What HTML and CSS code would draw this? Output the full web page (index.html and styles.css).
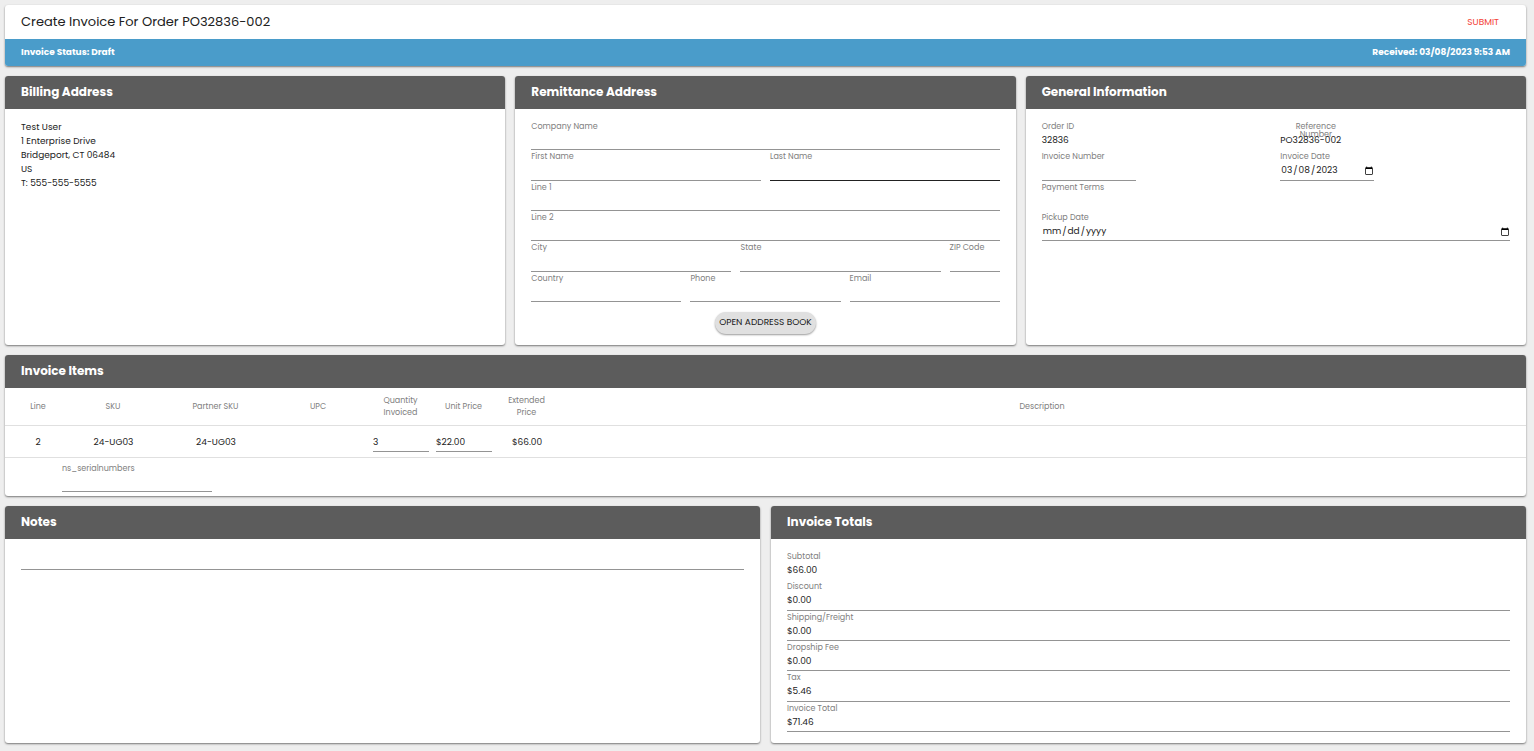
FILE: index.html
```
<!DOCTYPE html>
<html lang="en">
<head>
    <meta charset="utf-8">
    <title>Create Invoice For Order PO32836-002</title>
    <link rel="stylesheet" href="styles.css">
</head>
<body>
    <header class="card">
        <div class="title-bar">
            <h1>Create Invoice For Order PO32836-002</h1>
            <button class="submit-btn" type="submit">SUBMIT</button>
        </div>
        <div class="status-bar">
            <span>Invoice Status: Draft</span>
            <span>Received: 03/08/2023 9:53 AM</span>
        </div>
    </header>

    <div class="cards three">
        <section class="card">
            <h2>Billing Address</h2>
            <address class="card-body">
                Test User<br>
                1 Enterprise Drive<br>
                Bridgeport, CT 06484<br>
                US<br>
                T: 555-555-5555
            </address>
        </section>

        <section class="card">
            <h2>Remittance Address</h2>
            <div class="card-body">
                <div class="fields">
                    <div class="row">
                        <div class="field"><label for="company">Company Name</label><input type="text" id="company"></div>
                    </div>
                    <div class="row">
                        <div class="field"><label for="first">First Name</label><input type="text" id="first"></div>
                        <div class="field"><label for="last">Last Name</label><input type="text" id="last" class="active"></div>
                    </div>
                    <div class="row">
                        <div class="field"><label for="line1">Line 1</label><input type="text" id="line1"></div>
                    </div>
                    <div class="row">
                        <div class="field"><label for="line2">Line 2</label><input type="text" id="line2"></div>
                    </div>
                    <div class="row">
                        <div class="field wide"><label for="city">City</label><input type="text" id="city"></div>
                        <div class="field wide"><label for="state">State</label><input type="text" id="state"></div>
                        <div class="field"><label for="zip">ZIP Code</label><input type="text" id="zip"></div>
                    </div>
                    <div class="row">
                        <div class="field"><label for="country">Country</label><input type="text" id="country"></div>
                        <div class="field"><label for="phone">Phone</label><input type="tel" id="phone"></div>
                        <div class="field"><label for="email">Email</label><input type="email" id="email"></div>
                    </div>
                </div>
                <button class="book-btn" type="button">OPEN ADDRESS BOOK</button>
            </div>
        </section>

        <section class="card">
            <h2>General Information</h2>
            <div class="card-body">
                <div class="fields">
                    <div class="row">
                        <div class="field"><span class="label">Order ID</span><span class="value">32836</span></div>
                        <div class="field"><span class="label ref-label">Reference<br>Number</span><span class="value">PO32836-002</span></div>
                    </div>
                    <div class="row">
                        <div class="field"><label for="invnum">Invoice Number</label><input type="text" id="invnum" class="short"></div>
                        <div class="field"><label for="invdate">Invoice Date</label><input type="date" id="invdate" class="short" value="2023-03-08"></div>
                    </div>
                    <div class="row">
                        <div class="field"><span class="label">Payment Terms</span><span class="value"></span></div>
                    </div>
                    <div class="row">
                        <div class="field"><label for="pickup">Pickup Date</label><input type="date" id="pickup"></div>
                    </div>
                </div>
            </div>
        </section>
    </div>

    <section class="card">
        <h2>Invoice Items</h2>
        <table class="items">
            <colgroup>
                <col class="col-line">
                <col class="col-sku">
                <col class="col-partner">
                <col class="col-sku">
                <col class="col-num">
                <col class="col-num">
                <col class="col-num">
                <col>
            </colgroup>
            <thead>
                <tr>
                    <th>Line</th>
                    <th>SKU</th>
                    <th>Partner SKU</th>
                    <th>UPC</th>
                    <th>Quantity Invoiced</th>
                    <th>Unit Price</th>
                    <th>Extended Price</th>
                    <th>Description</th>
                </tr>
            </thead>
            <tbody>
                <tr>
                    <td>2</td>
                    <td>24-UG03</td>
                    <td>24-UG03</td>
                    <td></td>
                    <td><input type="text" aria-label="Quantity Invoiced" value="3"></td>
                    <td><input type="text" aria-label="Unit Price" value="$22.00"></td>
                    <td>$66.00</td>
                    <td></td>
                </tr>
                <tr class="serial-row">
                    <td></td>
                    <td colspan="7">
                        <div class="field serial"><label for="serial">ns_serialnumbers</label><input type="text" id="serial"></div>
                    </td>
                </tr>
            </tbody>
        </table>
    </section>

    <div class="cards two">
        <section class="card">
            <h2>Notes</h2>
            <div class="card-body">
                <textarea class="notes" rows="1" aria-label="Notes"></textarea>
            </div>
        </section>

        <section class="card">
            <h2>Invoice Totals</h2>
            <div class="card-body">
                <div class="fields">
                    <div class="field"><span class="label">Subtotal</span><span class="value">$66.00</span></div>
                    <div class="field"><label for="discount">Discount</label><input type="text" id="discount" value="$0.00"></div>
                    <div class="field"><label for="shipping">Shipping/Freight</label><input type="text" id="shipping" value="$0.00"></div>
                    <div class="field"><label for="dropship">Dropship Fee</label><input type="text" id="dropship" value="$0.00"></div>
                    <div class="field"><label for="tax">Tax</label><input type="text" id="tax" value="$5.46"></div>
                    <div class="field"><label for="total">Invoice Total</label><input type="text" id="total" value="$71.46"></div>
                </div>
            </div>
        </section>
    </div>
</body>
</html>
```
FILE: styles.css
```
* { box-sizing: border-box; }
body { display: flex; flex-direction: column; gap: 10px; min-height: 100vh; margin: 0; padding: 5px 8px 8px 5px; background: #eee; color: #212121; font-family: Poppins, Inter, sans-serif; font-size: 9px; line-height: 14px; }
input, button, textarea { font-family: inherit; font-size: inherit; color: inherit; }

.card { display: flex; flex-direction: column; background: white; border-radius: 3px; overflow: hidden; box-shadow: 0 1px 2px rgba(0, 0, 0, 0.5); }
.card h2 { margin: 0; padding: 0 16px 1px; background: #5c5c5c; color: white; font-size: 12px; font-weight: 700; line-height: 32px; }
.card-body { display: flex; flex: 1; flex-direction: column; padding: 11px 16px; }
.cards { display: grid; gap: 10px; }
.three { grid-template-columns: repeat(3, 1fr); min-height: 269px; }
.two { flex: 1; grid-template-columns: repeat(2, 1fr); gap: 11px; }

.title-bar, .status-bar { display: flex; align-items: center; justify-content: space-between; padding: 0 16px; }
.title-bar { height: 34px; }
.title-bar h1 { margin: 0; font-size: 13px; font-weight: 400; }
.submit-btn { padding: 0 11px; background: none; border: none; color: #f44336; cursor: pointer; }
.status-bar { height: 27px; padding-bottom: 2px; background: #4a9cca; color: white; font-weight: 700; }

address { display: block; font-style: normal; }

.fields { display: grid; flex: 1; grid-template-rows: repeat(6, 1fr); }
.three .fields { flex: none; min-height: 182px; }
.row { display: flex; gap: 9px; }
.field { display: flex; flex: 1 1 0; flex-direction: column; min-width: 0; }
.field.wide { flex-grow: 4; }
.field label, .label { height: 12px; color: #808080; font-size: 8px; line-height: 14px; white-space: nowrap; }
.field .ref-label { width: 71px; padding-top: 3px; line-height: 8px; text-align: center; }
.value { line-height: 16px; }
input { width: 100%; height: 18px; padding: 0; background: none; border: none; border-bottom: 1px solid #949494; border-radius: 0; outline: none; }
.field input { flex: 1; min-height: 0; }
.field .short { width: 94px; }
.field .active { border-bottom-color: #212121; }
input[type="date"]::-webkit-calendar-picker-indicator { width: 10px; height: 10px; padding: 0; }

.book-btn { align-self: center; height: 22px; margin-top: 10px; padding: 0 4px 2px; background: #e0e0e0; border: none; border-radius: 11px; box-shadow: 0 1px 2px rgba(0, 0, 0, 0.4); cursor: pointer; }

.items { width: 100%; border-collapse: separate; border-spacing: 0; table-layout: fixed; }
.col-line { width: 57px; }
.col-sku { width: 102px; }
.col-partner { width: 103px; }
.col-num { width: 63px; }
.items th, .items td { border-bottom: 1px solid #e0e0e0; text-align: center; }
.items th { padding: 7px 3px 6px; color: #808080; font-size: 8px; font-weight: 400; line-height: 12px; }
.items td { padding: 8px 3px 5px 4px; line-height: 17px; vertical-align: top; }
.items th:first-child, .items td:first-child { padding-left: 16px; padding-right: 7px; }
.items td input { display: block; }
.items .serial-row td { padding: 4px 0; border-bottom: none; text-align: left; }
.serial { width: 150px; height: 30px; }

.notes { width: 100%; height: 20px; padding: 0; background: none; border: none; border-bottom: 1px solid #949494; outline: none; resize: none; }
```
